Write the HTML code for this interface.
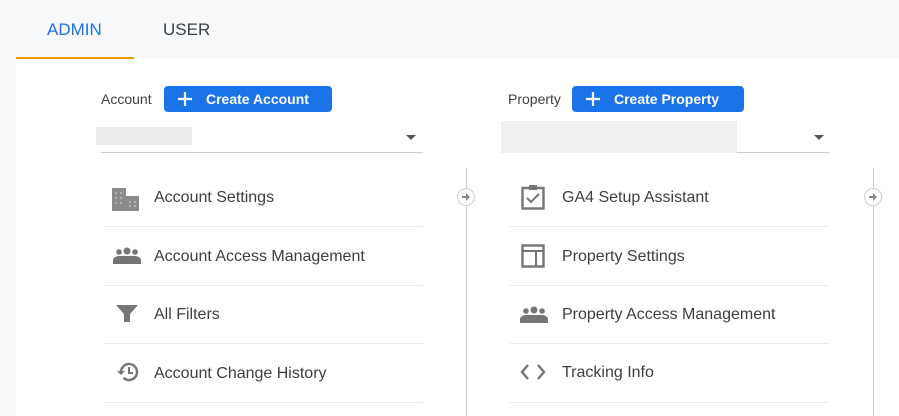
<!DOCTYPE html>
<html><head><meta charset="utf-8"><style>
*{margin:0;padding:0;box-sizing:border-box}
body{width:899px;height:416px;overflow:hidden;background:#f8f9fa;font-family:"Liberation Sans",Roboto,Arial,sans-serif;position:relative;color:#3c4043}
.abs{position:absolute}
.tab{position:absolute;top:20px;font-size:17px;font-weight:500}
.panel{position:absolute;left:16px;top:59px;right:0;bottom:0;background:#fff}
.lbl{position:absolute;font-size:14px;color:#3c4043}
.btn{position:absolute;height:26px;background:#1a73e8;border-radius:4px;color:#fff;font-weight:bold;font-size:14px;line-height:26px}
.btn svg{position:absolute;left:13px;top:5px}
.btn span{position:absolute;left:42px}
.item{position:absolute;font-size:16px;color:#3c4043}
.sep{position:absolute;height:1px;background:#e8eaed}
.vl{position:absolute;width:1px;background:#ccc;top:168px;bottom:0}
.circ{position:absolute;width:18px;height:18px;border-radius:50%;border:1px solid #ccc;background:#fff}
.circ svg{position:absolute;left:3px;top:3px}
</style></head><body>
<div class="tab" style="left:47px;color:#1a73e8">ADMIN</div>
<div class="tab" style="left:163px;color:#3c4043">USER</div>
<div class="abs" style="left:16px;top:57px;width:118px;height:2px;background:#f29900"></div>
<div class="panel"></div>

<div class="lbl" style="left:101px;top:91px">Account</div>
<div class="btn" style="left:164px;top:86px;width:168px"><svg width="16" height="16"><path d="M8 1v14M1 8h14" stroke="#fff" stroke-width="2.2"/></svg><span>Create Account</span></div>
<div class="abs" style="left:96px;top:127px;width:96px;height:18px;background:#ececec"></div>
<div class="abs" style="left:406px;top:135px;width:0;height:0;border-left:5px solid transparent;border-right:5px solid transparent;border-top:5px solid #555"></div>
<div class="abs" style="left:101px;top:152px;width:322px;height:1px;background:#ccc"></div>

<div class="lbl" style="left:508px;top:91px">Property</div>
<div class="btn" style="left:572px;top:86px;width:172px"><svg width="16" height="16"><path d="M8 1v14M1 8h14" stroke="#fff" stroke-width="2.2"/></svg><span>Create Property</span></div>
<div class="abs" style="left:501px;top:121px;width:236px;height:32px;background:#efefef"></div>
<div class="abs" style="left:814px;top:135px;width:0;height:0;border-left:5px solid transparent;border-right:5px solid transparent;border-top:5px solid #555"></div>
<div class="abs" style="left:737px;top:152px;width:92px;height:1px;background:#ccc"></div>

<svg class="abs" style="left:111px;top:187px" width="30" height="25"><path d="M1 1h14v8h13v15H1z" fill="#8a8a8a"/><g fill="#b0b0b0"><rect x="4" y="5" width="2" height="2"/><rect x="9" y="5" width="2" height="2"/><rect x="4" y="10" width="2" height="2"/><rect x="9" y="10" width="2" height="2"/><rect x="4" y="15" width="2" height="2"/><rect x="9" y="15" width="2" height="2"/><rect x="18" y="14" width="2" height="2"/><rect x="23" y="14" width="2" height="2"/><rect x="18" y="18" width="2" height="2"/><rect x="23" y="18" width="2" height="2"/></g></svg>
<div class="item" style="left:154px;top:189px">Account Settings</div>
<div class="sep" style="left:104px;top:226px;width:319px"></div>
<svg class="abs" style="left:112px;top:246px" width="30" height="20"><g fill="#757575"><circle cx="15" cy="5" r="3.5"/><circle cx="7" cy="6" r="2.8"/><circle cx="23" cy="6" r="2.8"/><path d="M1 18v-4c0-2 3-4 6-4h16c3 0 6 2 6 4v4z"/></g></svg>
<div class="item" style="left:154px;top:248px">Account Access Management</div>
<div class="sep" style="left:104px;top:285px;width:319px"></div>
<svg class="abs" style="left:115px;top:303px" width="24" height="20"><path d="M1 2h22l-8 9v8h-6v-8z" fill="#757575"/></svg>
<div class="item" style="left:154px;top:306px">All Filters</div>
<div class="sep" style="left:104px;top:343px;width:319px"></div>
<svg class="abs" style="left:116px;top:361px" width="24" height="22"><path d="M5 11a8 8 0 1 1 2.5 5.8" fill="none" stroke="#757575" stroke-width="2.4"/><path d="M1 10h8l-4 4z" fill="#757575"/><path d="M13 6v6h4" fill="none" stroke="#757575" stroke-width="2"/></svg>
<div class="item" style="left:154px;top:365px">Account Change History</div>
<div class="sep" style="left:104px;top:402px;width:319px"></div>

<div class="vl" style="left:466px"></div>
<div class="circ" style="left:457px;top:188px"><svg width="10" height="10"><path d="M1 4h4V1l4 4-4 4V6H1z" fill="#888"/></svg></div>
<div class="vl" style="left:873px"></div>
<div class="circ" style="left:864px;top:188px"><svg width="10" height="10"><path d="M1 4h4V1l4 4-4 4V6H1z" fill="#888"/></svg></div>

<svg class="abs" style="left:521px;top:184px" width="24" height="26"><rect x="1.5" y="4" width="21" height="20.5" fill="none" stroke="#757575" stroke-width="2.4"/><rect x="8" y="1" width="8" height="5" fill="#757575"/><path d="M6 14l4 4 8-8" fill="none" stroke="#757575" stroke-width="2"/></svg>
<div class="item" style="left:562px;top:189px">GA4 Setup Assistant</div>
<div class="sep" style="left:510px;top:226px;width:319px"></div>
<svg class="abs" style="left:521px;top:244px" width="24" height="24"><rect x="1.5" y="1.5" width="21" height="21" fill="none" stroke="#757575" stroke-width="2.4"/><path d="M1 7h22M15 7v16" stroke="#757575" stroke-width="2"/></svg>
<div class="item" style="left:562px;top:248px">Property Settings</div>
<div class="sep" style="left:510px;top:285px;width:319px"></div>
<svg class="abs" style="left:519px;top:305px" width="30" height="20"><g fill="#757575"><circle cx="15" cy="5" r="3.5"/><circle cx="7" cy="6" r="2.8"/><circle cx="23" cy="6" r="2.8"/><path d="M1 18v-4c0-2 3-4 6-4h16c3 0 6 2 6 4v4z"/></g></svg>
<div class="item" style="left:562px;top:306px">Property Access Management</div>
<div class="sep" style="left:510px;top:343px;width:319px"></div>
<svg class="abs" style="left:519px;top:363px" width="28" height="18"><path d="M9 2L3 9l6 7M19 2l6 7-6 7" fill="none" stroke="#757575" stroke-width="2.4"/></svg>
<div class="item" style="left:562px;top:364px">Tracking Info</div>
<div class="sep" style="left:510px;top:402px;width:319px"></div>
</body></html>
